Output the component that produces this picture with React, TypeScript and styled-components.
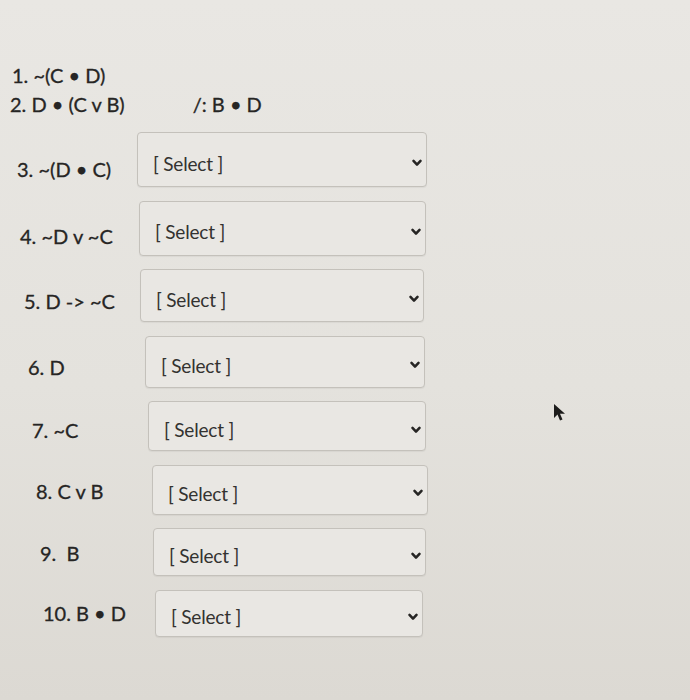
import React from "react";
import styled, { createGlobalStyle } from "styled-components";

const GlobalStyle = createGlobalStyle`
  html, body {
    margin: 0;
    padding: 0;
  }
  body {
    width: 690px;
    height: 700px;
    overflow: hidden;
    background: linear-gradient(180deg, #e9e7e3 0%, #e4e2dd 55%, #dcd9d3 100%);
    font-family: Lato, "Open Sans", "Liberation Sans", sans-serif;
    color: #262524;
  }
`;

const Page = styled.div`
  position: relative;
  width: 690px;
  height: 700px;
  padding-top: 60px;
  box-sizing: border-box;
`;

const Premise = styled.div<{ $indent: number }>`
  display: flex;
  align-items: center;
  height: 29px;
  padding-left: ${(p) => p.$indent}px;
  font-size: 20px;
  -webkit-text-stroke: 0.3px #262524;
  white-space: pre;
`;

const Conclusion = styled.span`
  margin-left: 68px;
`;

const Steps = styled.div`
  display: flex;
  flex-direction: column;
  gap: 13.5px;
  margin-top: 14px;
`;

const Row = styled.div<{ $indent: number }>`
  display: flex;
  align-items: center;
  padding-left: ${(p) => p.$indent}px;
`;

const Label = styled.div<{ $width: number; $drop: number }>`
  width: ${(p) => p.$width}px;
  padding-top: ${(p) => p.$drop * 2}px;
  font-size: 20px;
  -webkit-text-stroke: 0.3px #262524;
  white-space: pre;
`;

const SelectBox = styled.div<{ $width: number; $height: number }>`
  display: flex;
  align-items: center;
  justify-content: space-between;
  box-sizing: border-box;
  width: ${(p) => p.$width}px;
  height: ${(p) => p.$height}px;
  padding: 7px 4px 0 15px;
  background: #e9e7e3;
  border: 1.5px solid #c4c1bb;
  border-radius: 4px;
  box-shadow: 0 1px 1px rgba(0, 0, 0, 0.05);
`;

const Placeholder = styled.span`
  font-size: 19px;
  color: #333230;
  letter-spacing: -0.2px;
`;

const Chevron = styled.svg`
  width: 10px;
  height: 8px;
  flex: none;
`;

const Cursor = styled.svg`
  position: absolute;
  left: 553px;
  top: 403px;
  width: 13px;
  height: 19px;
`;

const steps = [
  { label: "3. ~(D \u2022 C)", indent: 17, box: 137, w: 290, h: 55, drop: 9 },
  { label: "4. ~D v ~C", indent: 20, box: 139, w: 287, h: 55, drop: 7.5 },
  { label: "5. D -> ~C", indent: 24, box: 140, w: 284, h: 53, drop: 5.5 },
  { label: "6. D", indent: 28, box: 145, w: 280, h: 52, drop: 5 },
  { label: "7. ~C", indent: 32, box: 148, w: 278, h: 50, drop: 3.5 },
  { label: "8. C v B", indent: 36, box: 152, w: 276, h: 50, drop: 1.5 },
  { label: "9.  B", indent: 40, box: 153, w: 273, h: 48, drop: 1 },
  { label: "10. B \u2022 D", indent: 43, box: 155, w: 268, h: 47, drop: 0 },
];

function ChevronIcon() {
  return (
    <Chevron viewBox="0 0 10 8">
      <polyline
        points="1.5,1.8 5,5.6 8.5,1.8"
        fill="none"
        stroke="#262524"
        strokeWidth="2.5"
        strokeLinecap="round"
        strokeLinejoin="round"
      />
    </Chevron>
  );
}

export default function App() {
  return (
    <>
      <GlobalStyle />
      <Page>
        <Premise $indent={12}>1. ~(C {"\u2022"} D)</Premise>
        <Premise $indent={10}>
          2. D {"\u2022"} (C v B)
          <Conclusion>/: B {"\u2022"} D</Conclusion>
        </Premise>
        <Steps>
          {steps.map((s) => (
            <Row key={s.label} $indent={s.indent}>
              <Label $width={s.box - s.indent} $drop={s.drop}>
                {s.label}
              </Label>
              <SelectBox $width={s.w} $height={s.h}>
                <Placeholder>[ Select ]</Placeholder>
                <ChevronIcon />
              </SelectBox>
            </Row>
          ))}
        </Steps>
        <Cursor viewBox="0 0 13 19">
          <path d="M1 1 L1 15 L4.5 11.5 L7 17.5 L9.5 16.5 L7 10.8 L12 10.8 Z" fill="#1d1c1b" />
        </Cursor>
      </Page>
    </>
  );
}
